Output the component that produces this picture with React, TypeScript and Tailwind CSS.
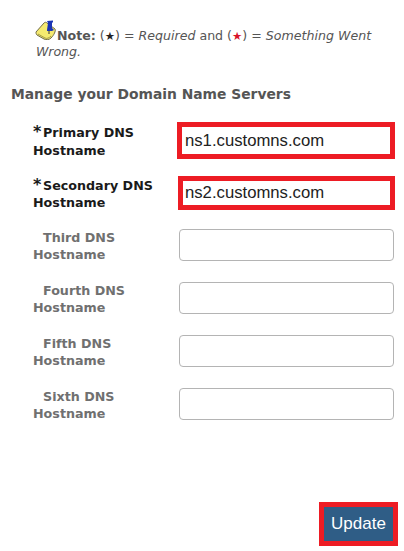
function NoteIcon() {
    return (
        <svg width="22" height="20" viewBox="0 0 22 20" className="mb-[4px] -ml-[1px] shrink-0">
            <path d="M1 12 L9 3 C10 2 11 2 12 3 L20 9 C21 11 19 15 16 18 C14 20 11 20 9 19 L2 15 C1 14 1 13 1 12 Z" fill="#f5ea70" stroke="#6f6a45" strokeWidth="1" />
            <path d="M3 14 L10 18 C12 19 14 18 16 16" fill="none" stroke="#a49c46" strokeWidth="1" />
            <path d="M12 10 L13 3 L12 1 L18 0.5 L18 2 L17 3 L17 8 L19 10 L17 11 L12 11 Z" fill="#1b35b5" />
            <path d="M14 11 L14 14" stroke="#333" strokeWidth="1" />
        </svg>
    );
}

function Row({ label, required, value, first }: { label: string, required?: boolean, value?: string, first?: boolean }) {
    let labelClass = "leading-[17px]";
    if (first) labelClass = "pt-[2px] leading-[18px]";
    else if (required) labelClass = "pt-[1px] leading-[17px]";

    return (
        <div className={`flex pl-[33px] ${first ? "h-[54px]" : "h-[53px]"}`}>
            <div className={`w-[144px] shrink-0 text-[12.7px] font-bold ${labelClass} ${required ? "text-[#1a1a1a]" : "text-[#707070]"}`}>
                <div className="flex items-start">
                    {required
                        ? <span className="w-[10px] text-[16px] leading-[15px]">*</span>
                        : <span className="w-[10px]" />}
                    <span>{label}</span>
                </div>
                <div>Hostname</div>
            </div>
            {required ? (
                <input
                    readOnly
                    value={value}
                    className={`${first ? "h-[37px] w-[218px] pl-[3px]" : "ml-px h-[34px] w-[217px] pl-[2px]"} border-[5px] border-[#ed1c24] font-['Liberation_Sans',sans-serif] text-[16.7px] text-[#222] outline-none`}
                />
            ) : (
                <input
                    readOnly
                    className="ml-[2px] h-[32px] w-[215px] rounded-[4px] border border-[#b4b4b4] bg-white outline-none"
                />
            )}
        </div>
    );
}

export default function App() {
    return (
        <div className="h-[551px] w-[404px] overflow-hidden bg-white font-['DejaVu_Sans',sans-serif] text-[#555]">
            <div className="pl-[36px] pt-[20px] text-[12.6px] leading-[16px]">
                <div className="flex h-[24px] items-end">
                    <NoteIcon />
                    <span className="whitespace-nowrap">
                        <b>Note:</b> (<span className="text-[11.5px] leading-[0] text-[#222]">★</span>) = <i>Required</i> and (<span className="text-[11.5px] leading-[0] text-[#d8132a]">★</span>) = <i>Something Went</i>
                    </span>
                </div>
                <div className="italic">Wrong.</div>
            </div>

            <h2 className="mt-[26px] pl-[11px] text-[13.85px] leading-[17px] font-bold">Manage your Domain Name Servers</h2>

            <div className="mt-[19px]">
                <Row label="Primary DNS" required first value="ns1.customns.com" />
                <Row label="Secondary DNS" required value="ns2.customns.com" />
                <Row label="Third DNS" />
                <Row label="Fourth DNS" />
                <Row label="Fifth DNS" />
                <Row label="Sixth DNS" />
            </div>

            <div className="mt-[61px] flex justify-end pr-[6px]">
                <button className="h-[44px] w-[79px] border-[5px] border-[#ed1c24] bg-[#2f5d86] font-['Liberation_Sans',sans-serif] text-[17px] text-white">
                    Update
                </button>
            </div>
        </div>
    );
}
